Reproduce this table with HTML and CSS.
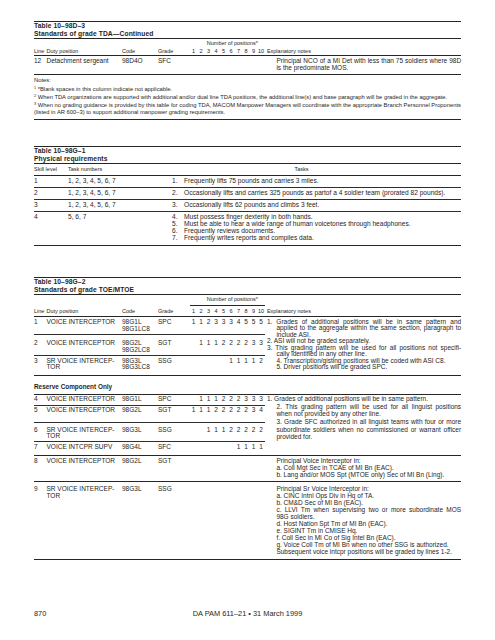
FILE: index.html
```html
<!DOCTYPE html>
<html lang="en">
<head>
<meta charset="utf-8">
<title>DA PAM 611–21 page 870</title>
<link rel="stylesheet" href="styles.css">
</head>
<body>
<main class="page">

<section class="tbl t1">
  <header class="cap">
    <div>Table 10–98D–3</div>
    <div>Standards of grade TDA—Continued</div>
  </header>
  <table class="grade">
    <colgroup>
      <col class="c-line"><col class="c-duty"><col class="c-code"><col class="c-grade">
      <col class="c-n"><col class="c-n"><col class="c-n"><col class="c-n"><col class="c-n">
      <col class="c-n"><col class="c-n"><col class="c-n"><col class="c-n"><col class="c-n">
      <col class="c-notes">
    </colgroup>
    <tr class="hn"><td colspan="4"></td><td colspan="10" class="numtitle">Number of positions*</td><td></td></tr>
    <tr class="hc rule"><td>Line</td><td>Duty position</td><td>Code</td><td>Grade</td><td class="n">1</td><td class="n">2</td><td class="n">3</td><td class="n">4</td><td class="n">5</td><td class="n">6</td><td class="n">7</td><td class="n">8</td><td class="n">9</td><td class="n">10</td><td class="xh">Explanatory notes</td></tr>
    <tr class="r12 thick"><td>12</td><td>Detachment sergeant</td><td>98D4O</td><td>SFC</td><td class="n"></td><td class="n"></td><td class="n"></td><td class="n"></td><td class="n"></td><td class="n"></td><td class="n"></td><td class="n"></td><td class="n"></td><td class="n"></td><td class="notes"><div class="j">Principal NCO of a MI Det with less than 75 soldiers where 98D</div><div>is the predominate MOS.</div></td></tr>
  </table>
  <div class="tnotes">
    <p>Notes:</p>
    <p><sup>1</sup> *Blank spaces in this column indicate not applicable.</p>
    <p><sup>2</sup> When TDA organizations are supported with additional and/or dual line TDA positions, the additional line(s) and base paragraph will be graded in the aggregate.</p>
    <p><span class="j"><sup>3</sup> When no grading guidance is provided by this table for coding TDA, MACOM Manpower Managers will coordinate with the appropriate Branch Personnel Proponents</span><span class="ln">(listed in AR 600–3) to support additional manpower grading requirements.</span></p>
  </div>
</section>

<section class="tbl t2">
  <header class="cap">
    <div>Table 10–98G–1</div>
    <div>Physical requirements</div>
  </header>
  <table class="phys">
    <colgroup><col class="p-skill"><col class="p-task"><col class="p-tasks"></colgroup>
    <tr class="ph rule"><td>Skill level</td><td>Task numbers</td><td class="tasksh">Tasks</td></tr>
    <tr class="p1 part"><td>1</td><td>1, 2, 3, 4, 5, 6, 7</td><td class="tk"><div class="it"><span>1.</span>Frequently lifts 75 pounds and carries 3 miles.</div></td></tr>
    <tr class="p2 part"><td>2</td><td>1, 2, 3, 4, 5, 6, 7</td><td class="tk"><div class="it"><span>2.</span>Occasionally lifts and carries 325 pounds as partof a 4 soldier team (prorated 82 pounds).</div></td></tr>
    <tr class="p3 part"><td>3</td><td>1, 2, 3, 4, 5, 6, 7</td><td class="tk"><div class="it"><span>3.</span>Occasionally lifts 62 pounds and climbs 3 feet.</div></td></tr>
    <tr class="p4 thick"><td>4</td><td>5, 6, 7</td><td class="tk"><div class="it"><span>4.</span>Must possess finger dexterity in both hands.</div><div class="it"><span>5.</span>Must be able to hear a wide range of human voicetones through headphones.</div><div class="it"><span>6.</span>Frequently reviews documents.</div><div class="it"><span>7.</span>Frequently writes reports and compiles data.</div></td></tr>
  </table>
</section>

<section class="tbl t3">
  <header class="cap">
    <div>Table 10–98G–2</div>
    <div>Standards of grade TOE/MTOE</div>
  </header>
  <table class="grade toe">
    <colgroup>
      <col class="c-line"><col class="c-duty"><col class="c-code"><col class="c-grade">
      <col class="c-n"><col class="c-n"><col class="c-n"><col class="c-n"><col class="c-n">
      <col class="c-n"><col class="c-n"><col class="c-n"><col class="c-n"><col class="c-n">
      <col class="c-notes">
    </colgroup>
    <tr class="hn"><td colspan="4"></td><td colspan="10" class="numtitle ul">Number of positions*</td><td></td></tr>
    <tr class="hc rule"><td>Line</td><td>Duty position</td><td>Code</td><td>Grade</td><td class="n">1</td><td class="n">2</td><td class="n">3</td><td class="n">4</td><td class="n">5</td><td class="n">6</td><td class="n">7</td><td class="n">8</td><td class="n">9</td><td class="n">10</td><td class="xh">Explanatory notes</td></tr>

    <tr class="g1 part"><td>1</td><td>VOICE INTERCEPTOR</td><td>98G1L<br>98G1LC8</td><td>SPC</td><td class="n">1</td><td class="n">1</td><td class="n">2</td><td class="n">3</td><td class="n">3</td><td class="n">3</td><td class="n">4</td><td class="n">5</td><td class="n">5</td><td class="n">5</td>
      <td class="notes span nA" rowspan="3">
        <div class="j o">1. Grades of additional positions will be in same pattern and</div>
        <div class="j">applied to the aggregate within the same section, paragraph to</div>
        <div>include ASI.</div>
        <div class="o">2. ASI will not be graded separately.</div>
        <div class="j o">3. This grading pattern will be used for all positions not specifi-</div>
        <div>cally identified in any other line.</div>
        <div>4. Transcription/gisting positions will be coded with ASI C8.</div>
        <div>5. Driver positions will be graded SPC.</div>
      </td></tr>
    <tr class="g2 part"><td>2</td><td>VOICE INTERCEPTOR</td><td>98G2L<br>98G2LC8</td><td>SGT</td><td class="n"></td><td class="n">1</td><td class="n">1</td><td class="n">1</td><td class="n">2</td><td class="n">2</td><td class="n">2</td><td class="n">2</td><td class="n">3</td><td class="n">3</td></tr>
    <tr class="g3 thick"><td>3</td><td>SR VOICE INTERCEP-<br>TOR</td><td>98G3L<br>98G3LC8</td><td>SSG</td><td class="n"></td><td class="n"></td><td class="n"></td><td class="n"></td><td class="n"></td><td class="n">1</td><td class="n">1</td><td class="n">1</td><td class="n">1</td><td class="n">2</td></tr>

    <tr class="rc rule"><td colspan="15" class="rcomp">Reserve Component Only</td></tr>

    <tr class="g4 part"><td>4</td><td>VOICE INTERCEPTOR</td><td>98G1L</td><td>SPC</td><td class="n"></td><td class="n">1</td><td class="n">1</td><td class="n">1</td><td class="n">2</td><td class="n">2</td><td class="n">2</td><td class="n">3</td><td class="n">3</td><td class="n">3</td>
      <td class="notes span nB" rowspan="4">
        <div class="o">1. Grades of additional positions will be in same pattern.</div>
        <div class="j">2. This grading pattern will be used for all linguist positions</div>
        <div>when not provided by any other line.</div>
        <div class="j">3. Grade SFC authorized in all linguist teams with four or more</div>
        <div class="j">subordinate soldiers when no commissioned or warrant officer</div>
        <div>provided for.</div>
      </td></tr>
    <tr class="g5 part"><td>5</td><td>VOICE INTERCEPTOR</td><td>98G2L</td><td>SGT</td><td class="n">1</td><td class="n">1</td><td class="n">1</td><td class="n">2</td><td class="n">2</td><td class="n">2</td><td class="n">2</td><td class="n">2</td><td class="n">3</td><td class="n">4</td></tr>
    <tr class="g6 part"><td>6</td><td>SR VOICE INTERCEP-<br>TOR</td><td>98G3L</td><td>SSG</td><td class="n"></td><td class="n"></td><td class="n">1</td><td class="n">1</td><td class="n">1</td><td class="n">2</td><td class="n">2</td><td class="n">2</td><td class="n">2</td><td class="n">2</td></tr>
    <tr class="g7 thick"><td>7</td><td>VOICE INTCPR SUPV</td><td>98G4L</td><td>SFC</td><td class="n"></td><td class="n"></td><td class="n"></td><td class="n"></td><td class="n"></td><td class="n"></td><td class="n">1</td><td class="n">1</td><td class="n">1</td><td class="n">1</td></tr>

    <tr class="g8 thick"><td>8</td><td>VOICE INTERCEPTOR</td><td>98G2L</td><td>SGT</td><td class="n"></td><td class="n"></td><td class="n"></td><td class="n"></td><td class="n"></td><td class="n"></td><td class="n"></td><td class="n"></td><td class="n"></td><td class="n"></td>
      <td class="notes">
        <div>Principal Voice Interceptor in:</div>
        <div>a. Coll Mgt Sec in TCAE of MI Bn (EAC).</div>
        <div>b. Lang and/or MOS Spt (MTOE only) Sec of MI Bn (Ling).</div>
      </td></tr>
    <tr class="g9 thick"><td>9</td><td>SR VOICE INTERCEP-<br>TOR</td><td>98G3L</td><td>SSG</td><td class="n"></td><td class="n"></td><td class="n"></td><td class="n"></td><td class="n"></td><td class="n"></td><td class="n"></td><td class="n"></td><td class="n"></td><td class="n"></td>
      <td class="notes">
        <div>Principal Sr Voice Interceptor in:</div>
        <div>a. CINC Intnl Ops Div in Hq of TA.</div>
        <div>b. CM&amp;D Sec of MI Bn (EAC).</div>
        <div class="j">c. LLVI Tm when supervising two or more subordinate MOS</div>
        <div>98G soldiers.</div>
        <div>d. Host Nation Spt Tm of MI Bn (EAC).</div>
        <div>e. SIGINT Tm in CMISE Hq.</div>
        <div>f. Coll Sec in MI Co of Sig Intel Bn (EAC).</div>
        <div>g. Voice Coll Tm of MI Bn when no other SSG is authorized.</div>
        <div>Subsequent voice intcpr positions will be graded by lines 1-2.</div>
      </td></tr>
  </table>
</section>

<footer class="foot">
  <span class="pg">870</span>
  <span class="doc">DA PAM 611–21 • 31 March 1999</span>
  <span></span>
</footer>

</main>
</body>
</html>
```

FILE: styles.css
```css
* { box-sizing: border-box; }
html, body { margin: 0; padding: 0; background: #ffffff; }
body {
  width: 495px;
  font-family: "Liberation Sans", Arial, sans-serif;
  color: #1e1e1e;
}
.page { padding: 21px 34px 0 34px; width: 495px; }

/* captions */
.cap {
  border-top: 1.5px solid #262626;
  border-bottom: 1px solid #262626;
  font-weight: bold;
  font-size: 6.7px;
  line-height: 8px;
  height: 18px;
  padding-top: 0.25px;
  letter-spacing: 0.1px;
}

.t2 { margin-top: 26.5px; }
.t3 { margin-top: 30.5px; }

/* shared table */
table {
  width: 427px;
  table-layout: fixed;
  border-collapse: separate;
  border-spacing: 0;
  font-size: 6.5px;
  line-height: 6.7px;
}
td { padding: 0; vertical-align: top; white-space: nowrap; }

col.c-line { width: 12.5px; }
col.c-duty { width: 75.5px; }
col.c-code { width: 36px; }
col.c-grade { width: 31.75px; }
col.c-n { width: 7.5px; }
col.c-notes { width: 196.25px; }

td.n { text-align: center; }

.hn td { height: 8.5px; font-size: 5.5px; line-height: 7px; padding-top: 1px; }
.numtitle { text-align: center; padding-left: 10px !important; }
.hc td { font-size: 5.5px; line-height: 7px; height: 8.5px; padding-top: 0.5px; }
.xh { padding-left: 2px !important; }

tr.rule td { border-bottom: 1px solid #262626; }
tr.part td:not(.notes) { border-bottom: 1px solid #2e2e2e; }
tr.thick td { border-bottom: 1.5px solid #262626; }
td.notes.span { border-bottom: 1.5px solid #262626; }

.notes { padding-left: 11.5px !important; white-space: normal; }
.notes div { white-space: nowrap; }
.notes .j { text-align: justify; text-align-last: justify; white-space: normal; }
.notes .o { margin-left: -9.5px; }

.r12 td { height: 18.5px; padding-top: 2.25px; line-height: 6.5px; }

/* notes under table 1 */
.tnotes {
  font-size: 5.8px;
  line-height: 7px;
  padding: 2.5px 0 2.5px 0;
  border-bottom: 1.5px solid #262626;
}
.tnotes p { margin: 1.5px 0 0 0; }
.tnotes p:first-child { margin-top: 0; }
.tnotes p:last-child { margin-top: 1px; }
.tnotes sup { font-size: 3.8px; line-height: 0; vertical-align: 2.2px; }
.tnotes .j { display: block; text-align: justify; text-align-last: justify; }
.tnotes .ln { display: block; }

/* physical requirements */
.phys { font-size: 6.6px; }
col.p-skill { width: 34px; }
col.p-task { width: 92px; }
col.p-tasks { width: 301px; }
.ph td { font-size: 5.5px; line-height: 7px; height: 12px; padding-top: 2px; }
.tasksh { text-align: center; padding-right: 18px !important; }
.phys .tk { padding-left: 12px; }
.it { display: flex; }
.it span { width: 12px; flex: none; }
.p1 td { height: 12px; padding-top: 2px; }
.p2 td { height: 11.5px; padding-top: 1.5px; }
.p3 td { height: 12px; padding-top: 2.2px; }
.p4 td { height: 34.5px; padding-top: 2.55px; line-height: 6.9px; }

/* TOE table */
.toe .hn td { height: 11px; }
.numtitle.ul { border-bottom: 1px solid #262626; }
.toe .hc td { height: 11.5px; padding-top: 2px; }
.g1 td { height: 18px; padding-top: 2px; }
.g2 td { height: 21px; padding-top: 5.3px; }
.g3 td { height: 19.5px; padding-top: 1.6px; }
.nA { padding-top: 1.75px !important; line-height: 6.5px; }
.rc td { height: 19px; padding-top: 7px; line-height: 7px; font-weight: bold; font-size: 6.4px; }
.g4 td { height: 11.5px; padding-top: 1px; }
.g5 td { height: 17px; padding-top: 1px; }
.g6 td { height: 19px; padding-top: 3.6px; }
.g7 td { height: 13.5px; padding-top: 1.6px; }
.nB { padding-top: 0.7px !important; line-height: 7.6px; }
.g8 td { height: 26px; padding-top: 1px; line-height: 7px; }
.g9 td { height: 78.5px; padding-top: 3px; line-height: 7px; }

/* footer */
.foot {
  margin-top: 49px;
  display: grid;
  grid-template-columns: 1fr auto 1fr;
  font-size: 7.4px;
  line-height: 9px;
}
```
